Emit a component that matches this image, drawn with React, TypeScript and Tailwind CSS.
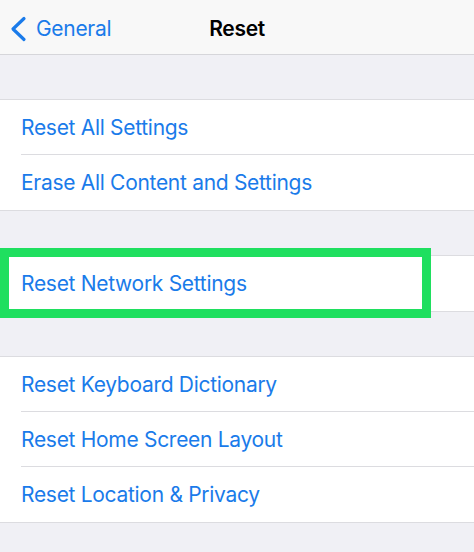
import React from "react";

const groups = [
  ["Reset All Settings", "Erase All Content and Settings"],
  ["Reset Network Settings"],
  ["Reset Keyboard Dictionary", "Reset Home Screen Layout", "Reset Location & Privacy"],
];

function Row({ label, last, highlight }: { label: string; last: boolean; highlight?: boolean }) {
  return (
    <div className="relative bg-white pl-[21px]">
      <div
        className={
          "flex h-[55px] items-center pt-[1px] text-[21px] tracking-[-0.3px] text-[#1a7bea] " +
          (last ? "" : "border-b border-[#dcdce0]")
        }
      >
        {label}
      </div>
      {highlight && (
        <div className="pointer-events-none absolute left-0 top-[-8px] bottom-[-7px] w-[431px] border-[9px] border-[#1fdf5f]" />
      )}
    </div>
  );
}

export default function App() {
  return (
    <div
      className="h-[552px] w-[474px] overflow-hidden bg-[#f0f0f5]"
      style={{ fontFamily: "Inter, 'Liberation Sans', sans-serif" }}
    >
      <header className="relative flex h-[55px] items-center border-b border-[#d6d6da] bg-[#f8f8f8] pt-[3px]">
        <div className="flex items-center pl-[10px]">
          <svg width="17" height="26" viewBox="0 0 17 26" className="mr-[9px]">
            <path d="M14 2.5 L3 13 L14 23.5" fill="none" stroke="#1a7bea" strokeWidth="3.2" strokeLinecap="round" strokeLinejoin="round" />
          </svg>
          <span className="text-[21px] tracking-[-0.3px] text-[#1a7bea]">General</span>
        </div>
        <div className="absolute left-0 right-0 text-center text-[21px] font-semibold tracking-[-0.3px] text-black">
          Reset
        </div>
      </header>
      {groups.map((rows, gi) => (
        <div key={gi} className="pt-[44px]">
          <div className="border-y border-[#dcdce0]">
            {rows.map((r, i) => (
              <Row key={r} label={r} last={i === rows.length - 1} highlight={r === "Reset Network Settings"} />
            ))}
          </div>
        </div>
      ))}
    </div>
  );
}
